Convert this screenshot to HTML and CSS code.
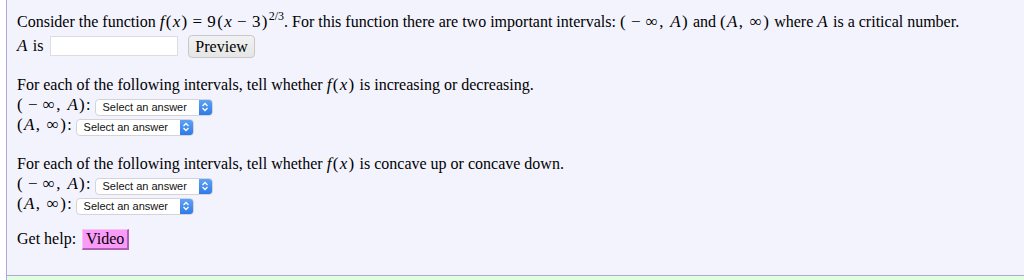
FILE: index.html
```html
<!DOCTYPE html>
<html>
<head>
<meta charset="utf-8">
<link rel="stylesheet" href="styles.css">
</head>
<body>
<div class="page">
  <div class="problem">
    <div class="para first">
      Consider the function <span class="m"><i>f</i>(<i>x</i>)<span class="op">=</span>9(<i>x</i><span class="op">−</span>3)<sup>2/3</sup></span>. For this function there are two important intervals: <span class="m">(<span class="op">−</span>∞, <i>A</i>)</span> and <span class="m">(<i>A</i>, ∞)</span> where <span class="m"><i>A</i></span> is a critical number.<br>
      <span class="m"><i>A</i></span> is <span class="input"></span><span class="btn">Preview</span>
    </div>
    <div class="para p2">
      <div class="line">For each of the following intervals, tell whether <span class="m"><i>f</i>(<i>x</i>)</span> is increasing or decreasing.</div>
      <div class="row"><span class="m">(<span class="op">−</span>∞, <i>A</i>)</span>:<span class="select"><span class="sel-text">Select an answer</span><span class="stepper"><svg width="8" height="10" viewBox="0 0 8 10"><path d="M1.5 4 L4 1.5 L6.5 4 M1.5 6 L4 8.5 L6.5 6" fill="none" stroke="#fff" stroke-width="1.3"/></svg></span></span></div>
      <div class="row"><span class="m">(<i>A</i>, ∞)</span>:<span class="select"><span class="sel-text">Select an answer</span><span class="stepper"><svg width="8" height="10" viewBox="0 0 8 10"><path d="M1.5 4 L4 1.5 L6.5 4 M1.5 6 L4 8.5 L6.5 6" fill="none" stroke="#fff" stroke-width="1.3"/></svg></span></span></div>
    </div>
    <div class="para p3">
      <div class="line">For each of the following intervals, tell whether <span class="m"><i>f</i>(<i>x</i>)</span> is concave up or concave down.</div>
      <div class="row"><span class="m">(<span class="op">−</span>∞, <i>A</i>)</span>:<span class="select"><span class="sel-text">Select an answer</span><span class="stepper"><svg width="8" height="10" viewBox="0 0 8 10"><path d="M1.5 4 L4 1.5 L6.5 4 M1.5 6 L4 8.5 L6.5 6" fill="none" stroke="#fff" stroke-width="1.3"/></svg></span></span></div>
      <div class="row"><span class="m">(<i>A</i>, ∞)</span>:<span class="select"><span class="sel-text">Select an answer</span><span class="stepper"><svg width="8" height="10" viewBox="0 0 8 10"><path d="M1.5 4 L4 1.5 L6.5 4 M1.5 6 L4 8.5 L6.5 6" fill="none" stroke="#fff" stroke-width="1.3"/></svg></span></span></div>
    </div>
    <div class="para help">Get help: <span class="video">Video</span></div>
  </div>
  <div class="next"></div>
</div>
</body>
</html>
```

FILE: styles.css
```css
html, body {
  margin: 0;
  padding: 0;
  background: #ffffff;
  overflow: hidden;
}
body {
  font-family: "Liberation Serif", "Times New Roman", serif;
  font-size: 16px;
  color: #000;
}
.page {
  margin-left: 6px;
  height: 280px;
  display: flex;
  flex-direction: column;
}
.problem {
  background: #f3f3fe;
  border-left: 1px solid #aaaadd;
  border-bottom: 1px solid #aaaadd;
  padding: 10px 10px 25px 10px;
}
.next {
  flex: 1;
  background: #e0ffe0;
  border-left: 1px solid #aaaadd;
}
.para {
  margin: 0;
  line-height: 20px;
}
.para.first {
  line-height: 24px;
}
.para.p2 {
  margin-top: 16px;
}
.para.p3 {
  margin-top: 19px;
}
.para.help {
  margin-top: 15px;
}
.line {
  height: 20px;
}
.row {
  display: flex;
  align-items: flex-start;
  height: 20px;
}
.m {
  font-size: 17px;
  letter-spacing: 1.3px;
  line-height: 0;
}
.row .m {
  line-height: 20px;
}
.m i {
  font-style: italic;
}
.op {
  margin: 0 4px;
}
sup {
  font-size: 12px;
  line-height: 0;
  letter-spacing: 0;
}
.input {
  display: inline-block;
  vertical-align: middle;
  width: 126px;
  height: 18px;
  background: #fff;
  border: 1px solid #dddde0;
  margin-left: 3px;
  margin-right: 10px;
  position: relative;
  top: -1px;
}
.btn {
  display: inline-block;
  vertical-align: middle;
  height: 21px;
  line-height: 21px;
  padding: 0 6px;
  background: linear-gradient(#f2f2f2, #e6e6e6);
  border: 1px solid #c8c8c8;
  border-radius: 4px;
  position: relative;
  top: -1px;
}
.select {
  display: flex;
  align-items: stretch;
  width: 116px;
  height: 15px;
  margin-top: 4px;
  margin-left: 4px;
  background: #fff;
  border: 1px solid #d4d4d8;
  border-radius: 4px;
}
.sel-text {
  flex: 1;
  font-family: "Liberation Sans", Arial, sans-serif;
  font-size: 11px;
  line-height: 15px;
  padding-left: 7px;
  color: #111;
}
.stepper {
  width: 13px;
  display: flex;
  align-items: center;
  justify-content: center;
  background: linear-gradient(#5ea2f6, #2f7ae8);
  border-radius: 0 3px 3px 0;
}
.video {
  display: inline-block;
  background: #fb9bf9;
  line-height: 18px;
  padding: 0 3px;
  border-style: solid;
  border-width: 1px 2px 2px 1px;
  border-color: #f4c4f2 #b060b0 #b060b0 #f4c4f2;
  margin-left: 2px;
}
```
